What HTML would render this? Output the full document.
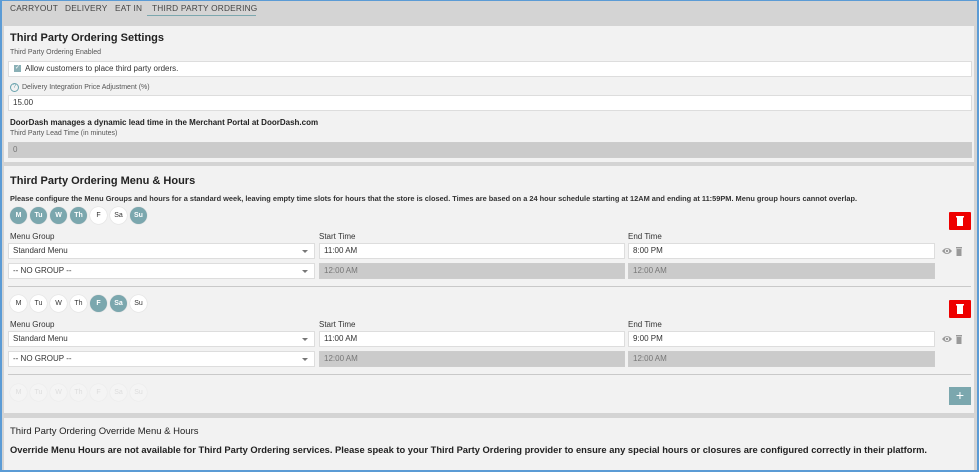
<!DOCTYPE html>
<html><head><meta charset="utf-8"><style>
*{box-sizing:border-box;margin:0;padding:0}
body{width:979px;height:472px;position:relative;overflow:hidden;background:#d4d4d4;font-family:"Liberation Sans",Arial,sans-serif;color:#222}
.a{position:absolute}
.frame{position:absolute;left:0;top:0;width:979px;height:472px;border:2px solid #5b9bd5;border-top-width:1px;pointer-events:none}
.panel{position:absolute;left:4px;width:970px;background:#f2f2f2}
.t{font-size:11px;font-weight:bold;color:#222}
.l{font-size:7px;color:#555}
.ml{font-size:8px;color:#333}
.in{position:absolute;height:16px;background:#fff;border:1px solid #ddd;font-size:8px;padding-left:4px;line-height:14px;color:#333}
.dis{background:#cbcbcb;border-color:#ccc;color:#777}
.sel::after{content:"";position:absolute;right:6px;top:6px;border-left:3px solid transparent;border-right:3px solid transparent;border-top:3px solid #777}
.c{position:absolute;width:17px;height:17px;border-radius:50%;font-size:7px;text-align:center;line-height:17px;background:#fff;color:#333;box-shadow:0 0 1px #bbb}
.on{background:#7ba7ae;color:#fff;font-weight:bold}
.off{background:#f4f4f4;color:#ddd;box-shadow:0 0 1px #ddd}
.red{position:absolute;width:22px;height:18px;background:#e00;border-radius:1px}
.hr{position:absolute;left:4px;width:963px;height:1px;background:#c9c9c9}
.tab{position:absolute;top:3px;font-size:8.3px;color:#444;letter-spacing:.2px;white-space:nowrap}
</style></head><body>
<div class="tab" style="left:10px">CARRYOUT</div>
<div class="tab" style="left:65px">DELIVERY</div>
<div class="tab" style="left:115px">EAT IN</div>
<div class="tab" style="left:152px">THIRD PARTY ORDERING</div>
<div class="a" style="left:147px;top:15px;width:109px;height:1px;background:#7ba7ae"></div>

<div class="panel" style="top:26px;height:136px">
 <div class="a t" style="left:6px;top:6px">Third Party Ordering Settings</div>
 <div class="a l" style="left:6px;top:23px">Third Party Ordering Enabled</div>
 <div class="in" style="left:4px;top:35px;width:964px;padding-left:16px">Allow customers to place third party orders.</div>
 <div class="a" style="left:10px;top:39px;width:7px;height:7px;background:#8ab0b6;color:#fff;font-size:6px;line-height:7px;text-align:center">✓</div>
 <div class="a" style="left:6px;top:57px;width:9px;height:9px;border:1px solid #6aa3ad;border-radius:50%;font-size:6px;line-height:7px;text-align:center;color:#6aa3ad">?</div>
 <div class="a l" style="left:18px;top:58px">Delivery Integration Price Adjustment (%)</div>
 <div class="in" style="left:4px;top:69px;width:964px">15.00</div>
 <div class="a" style="left:6px;top:92px;font-size:8px;font-weight:bold">DoorDash manages a dynamic lead time in the Merchant Portal at DoorDash.com</div>
 <div class="a l" style="left:6px;top:104px">Third Party Lead Time (in minutes)</div>
 <div class="in dis" style="left:4px;top:116px;width:964px">0</div>
</div>

<div class="panel" style="top:166px;height:247px">
 <div class="a t" style="left:6px;top:9px">Third Party Ordering Menu &amp; Hours</div>
 <div class="a" style="left:6px;top:28px;font-size:7.4px;font-weight:bold;color:#333;white-space:nowrap">Please configure the Menu Groups and hours for a standard week, leaving empty time slots for hours that the store is closed. Times are based on a 24 hour schedule starting at 12AM and ending at 11:59PM. Menu group hours cannot overlap.</div>
 <div class="c on" style="left:6px;top:41px">M</div><div class="c on" style="left:26px;top:41px">Tu</div><div class="c on" style="left:46px;top:41px">W</div><div class="c on" style="left:66px;top:41px">Th</div><div class="c" style="left:86px;top:41px">F</div><div class="c" style="left:106px;top:41px">Sa</div><div class="c on" style="left:126px;top:41px">Su</div>
 <div class="red" style="left:945px;top:46px"><svg width="22" height="18"><rect x="8" y="5" width="6" height="9" fill="#fff"/><rect x="7" y="4" width="8" height="1.5" fill="#fff"/></svg></div>
 <div class="a ml" style="left:6px;top:66px">Menu Group</div><div class="a ml" style="left:315px;top:66px">Start Time</div><div class="a ml" style="left:624px;top:66px">End Time</div>
 <div class="in sel" style="left:4px;top:77px;width:307px">Standard Menu</div>
 <div class="in" style="left:315px;top:77px;width:306px">11:00 AM</div>
 <div class="in" style="left:624px;top:77px;width:307px">8:00 PM</div>
 <svg class="a" style="left:937px;top:79px" width="24" height="12"><path d="M1 6 Q6 0 11 6 Q6 12 1 6Z" fill="#999"/><circle cx="6" cy="6" r="2.2" fill="#f2f2f2"/><circle cx="6" cy="6" r="1.2" fill="#999"/><rect x="15" y="2" width="6" height="1.5" fill="#999"/><rect x="15.5" y="4" width="5" height="7" fill="#999"/></svg>
 <div class="in sel" style="left:4px;top:97px;width:307px">-- NO GROUP --</div>
 <div class="in dis" style="left:315px;top:97px;width:306px">12:00 AM</div>
 <div class="in dis" style="left:624px;top:97px;width:307px">12:00 AM</div>
 <div class="hr" style="top:120px"></div>
 <div class="c" style="left:6px;top:129px">M</div><div class="c" style="left:26px;top:129px">Tu</div><div class="c" style="left:46px;top:129px">W</div><div class="c" style="left:66px;top:129px">Th</div><div class="c on" style="left:86px;top:129px">F</div><div class="c on" style="left:106px;top:129px">Sa</div><div class="c" style="left:126px;top:129px">Su</div>
 <div class="red" style="left:945px;top:134px"><svg width="22" height="18"><rect x="8" y="5" width="6" height="9" fill="#fff"/><rect x="7" y="4" width="8" height="1.5" fill="#fff"/></svg></div>
 <div class="a ml" style="left:6px;top:154px">Menu Group</div><div class="a ml" style="left:315px;top:154px">Start Time</div><div class="a ml" style="left:624px;top:154px">End Time</div>
 <div class="in sel" style="left:4px;top:165px;width:307px">Standard Menu</div>
 <div class="in" style="left:315px;top:165px;width:306px">11:00 AM</div>
 <div class="in" style="left:624px;top:165px;width:307px">9:00 PM</div>
 <svg class="a" style="left:937px;top:167px" width="24" height="12"><path d="M1 6 Q6 0 11 6 Q6 12 1 6Z" fill="#999"/><circle cx="6" cy="6" r="2.2" fill="#f2f2f2"/><circle cx="6" cy="6" r="1.2" fill="#999"/><rect x="15" y="2" width="6" height="1.5" fill="#999"/><rect x="15.5" y="4" width="5" height="7" fill="#999"/></svg>
 <div class="in sel" style="left:4px;top:185px;width:307px">-- NO GROUP --</div>
 <div class="in dis" style="left:315px;top:185px;width:306px">12:00 AM</div>
 <div class="in dis" style="left:624px;top:185px;width:307px">12:00 AM</div>
 <div class="hr" style="top:208px"></div>
 <div class="c off" style="left:6px;top:218px">M</div><div class="c off" style="left:26px;top:218px">Tu</div><div class="c off" style="left:46px;top:218px">W</div><div class="c off" style="left:66px;top:218px">Th</div><div class="c off" style="left:86px;top:218px">F</div><div class="c off" style="left:106px;top:218px">Sa</div><div class="c off" style="left:126px;top:218px">Su</div>
 <div class="a" style="left:945px;top:221px;width:22px;height:18px;background:#7ba7ae;color:#fff;font-size:14px;line-height:17px;text-align:center">+</div>
</div>

<div class="panel" style="top:418px;height:54px">
 <div class="a" style="left:6px;top:8px;font-size:9.5px;color:#222">Third Party Ordering Override Menu &amp; Hours</div>
 <div class="a" style="left:6px;top:27px;font-size:9.35px;font-weight:bold;color:#222;white-space:nowrap">Override Menu Hours are not available for Third Party Ordering services. Please speak to your Third Party Ordering provider to ensure any special hours or closures are configured correctly in their platform.</div>
</div>
<div class="frame"></div>
</body></html>
